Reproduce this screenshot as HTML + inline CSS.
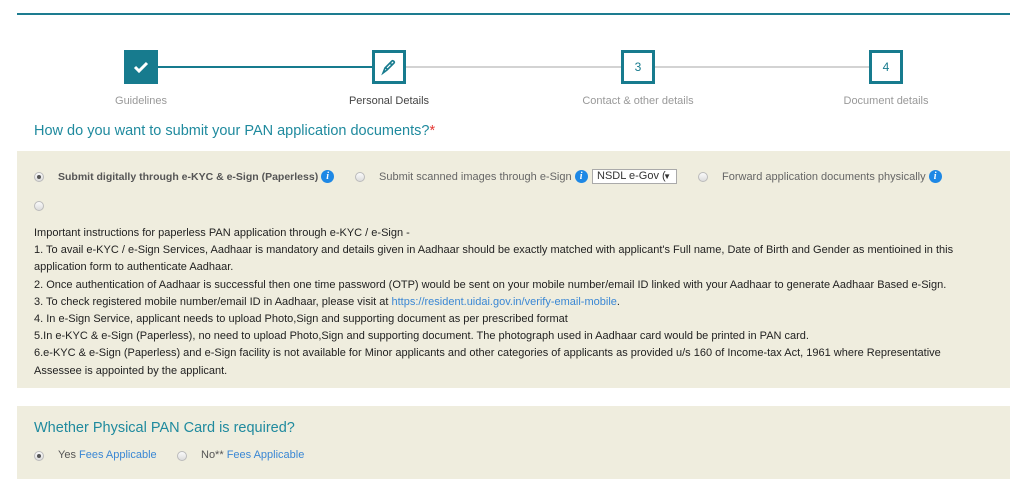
<!DOCTYPE html>
<html><head><style>
*{margin:0;padding:0;box-sizing:border-box}
body{width:1024px;height:479px;background:#fff;font-family:"Liberation Sans",sans-serif;position:relative;overflow:hidden;color:#333}
.a{position:absolute}
.box{position:absolute;top:50px;width:34px;height:34px;border:3px solid #177b8e;background:#fff;color:#177b8e;font-size:12px;text-align:center;line-height:28px}
.lbl{position:absolute;top:95px;font-size:11px;color:#999;white-space:nowrap;transform:translateX(-50%)}
.panel{position:absolute;left:17px;width:993px;background:#efedde}
.rad{position:absolute;width:10px;height:10px;border-radius:50%;border:1px solid #bbb;background:linear-gradient(#fafafa,#ddd)}
.rad.on::after{content:"";position:absolute;left:2px;top:2px;width:4px;height:4px;border-radius:50%;background:#555}
.t{position:absolute;font-size:11px;white-space:nowrap;line-height:14px}
.info{display:inline-block;width:13px;height:13px;border-radius:50%;background:#1e88e5;color:#fff;font:bold italic 10px/13px "Liberation Serif",serif;text-align:center;vertical-align:top;margin-top:0}
.lnk{color:#3a87d4}
.ins{position:absolute;left:17px;top:225px;width:930px;font-size:11px;line-height:17.2px;color:#222}
</style></head><body>
<div class="a" style="left:17px;top:13px;width:993px;height:2px;background:#1d7c90"></div>
<div class="a" style="left:158px;top:66px;width:215px;height:2px;background:#177b8e"></div>
<div class="a" style="left:406px;top:66px;width:466px;height:2px;background:#d3d3d3"></div>
<div class="box" style="left:124px;background:#177b8e;border-color:#177b8e"><svg width="20" height="20" viewBox="0 0 20 20" style="margin-top:4px"><path d="M4 10l4 4 8-8" stroke="#fff" stroke-width="3" fill="none"/></svg></div>
<div class="box" style="left:372px"><svg width="18" height="18" viewBox="0 0 18 18" style="margin-top:5px"><path d="M3 15l2-5 7-7c1-1 3 1 2 2l-7 7zM6 10l2 2M10 5l2 2" stroke="#177b8e" stroke-width="1.6" fill="none"/></svg></div>
<div class="box" style="left:621px">3</div>
<div class="box" style="left:869px">4</div>
<div class="lbl" style="left:141px">Guidelines</div>
<div class="lbl" style="left:389px;color:#444">Personal Details</div>
<div class="lbl" style="left:638px">Contact &amp; other details</div>
<div class="lbl" style="left:886px">Document details</div>
<div class="t" style="left:34px;top:122px;font-size:14.5px;line-height:18px;color:#1f8a9e">How do you want to submit your PAN application documents?<span style="color:#e53935">*</span></div>
<div class="panel" style="top:151px;height:237px">
<div class="rad on" style="left:17px;top:21px"></div>
<div class="t" style="left:41px;top:19px;font-weight:bold;font-size:10.5px;color:#555">Submit digitally through e-KYC &amp; e-Sign (Paperless) <span class="info">i</span></div>
<div class="rad" style="left:338px;top:21px"></div>
<div class="t" style="left:362px;top:19px;color:#666">Submit scanned images through e-Sign <span class="info">i</span></div>
<div class="a" style="left:575px;top:18px;width:85px;height:15px;border:1px solid #aaa;background:#fff;font-size:11px;padding-left:4px;line-height:13px;color:#333">NSDL e-Gov ( <span style="position:absolute;right:5px;font-size:8px">▼</span></div>
<div class="rad" style="left:681px;top:21px"></div>
<div class="t" style="left:705px;top:19px;color:#666">Forward application documents physically <span class="info">i</span></div>
<div class="rad" style="left:17px;top:50px"></div>
</div>
<div class="ins" style="left:34px">Important instructions for paperless PAN application through e-KYC / e-Sign -<br>1. To avail e-KYC / e-Sign Services, Aadhaar is mandatory and details given in Aadhaar should be exactly matched with applicant's Full name, Date of Birth and Gender as mentioined in this application form to authenticate Aadhaar.<br>2. Once authentication of Aadhaar is successful then one time password (OTP) would be sent on your mobile number/email ID linked with your Aadhaar to generate Aadhaar Based e-Sign.<br>3. To check registered mobile number/email ID in Aadhaar, please visit at <span class="lnk">https://resident.uidai.gov.in/verify-email-mobile</span>.<br>4. In e-Sign Service, applicant needs to upload Photo,Sign and supporting document as per prescribed format<br>5.In e-KYC &amp; e-Sign (Paperless), no need to upload Photo,Sign and supporting document. The photograph used in Aadhaar card would be printed in PAN card.<br>6.e-KYC &amp; e-Sign (Paperless) and e-Sign facility is not available for Minor applicants and other categories of applicants as provided u/s 160 of Income-tax Act, 1961 where Representative Assessee is appointed by the applicant.</div>
<div class="panel" style="top:406px;height:73px">
<div class="t" style="left:17px;top:13px;font-size:14.5px;line-height:18px;color:#1f8a9e">Whether Physical PAN Card is required?</div>
<div class="rad on" style="left:17px;top:45px"></div>
<div class="t" style="left:41px;top:42px;color:#555">Yes <span class="lnk">Fees Applicable</span></div>
<div class="rad" style="left:160px;top:45px"></div>
<div class="t" style="left:184px;top:42px;color:#555">No** <span class="lnk">Fees Applicable</span></div>
</div>
</body></html>
